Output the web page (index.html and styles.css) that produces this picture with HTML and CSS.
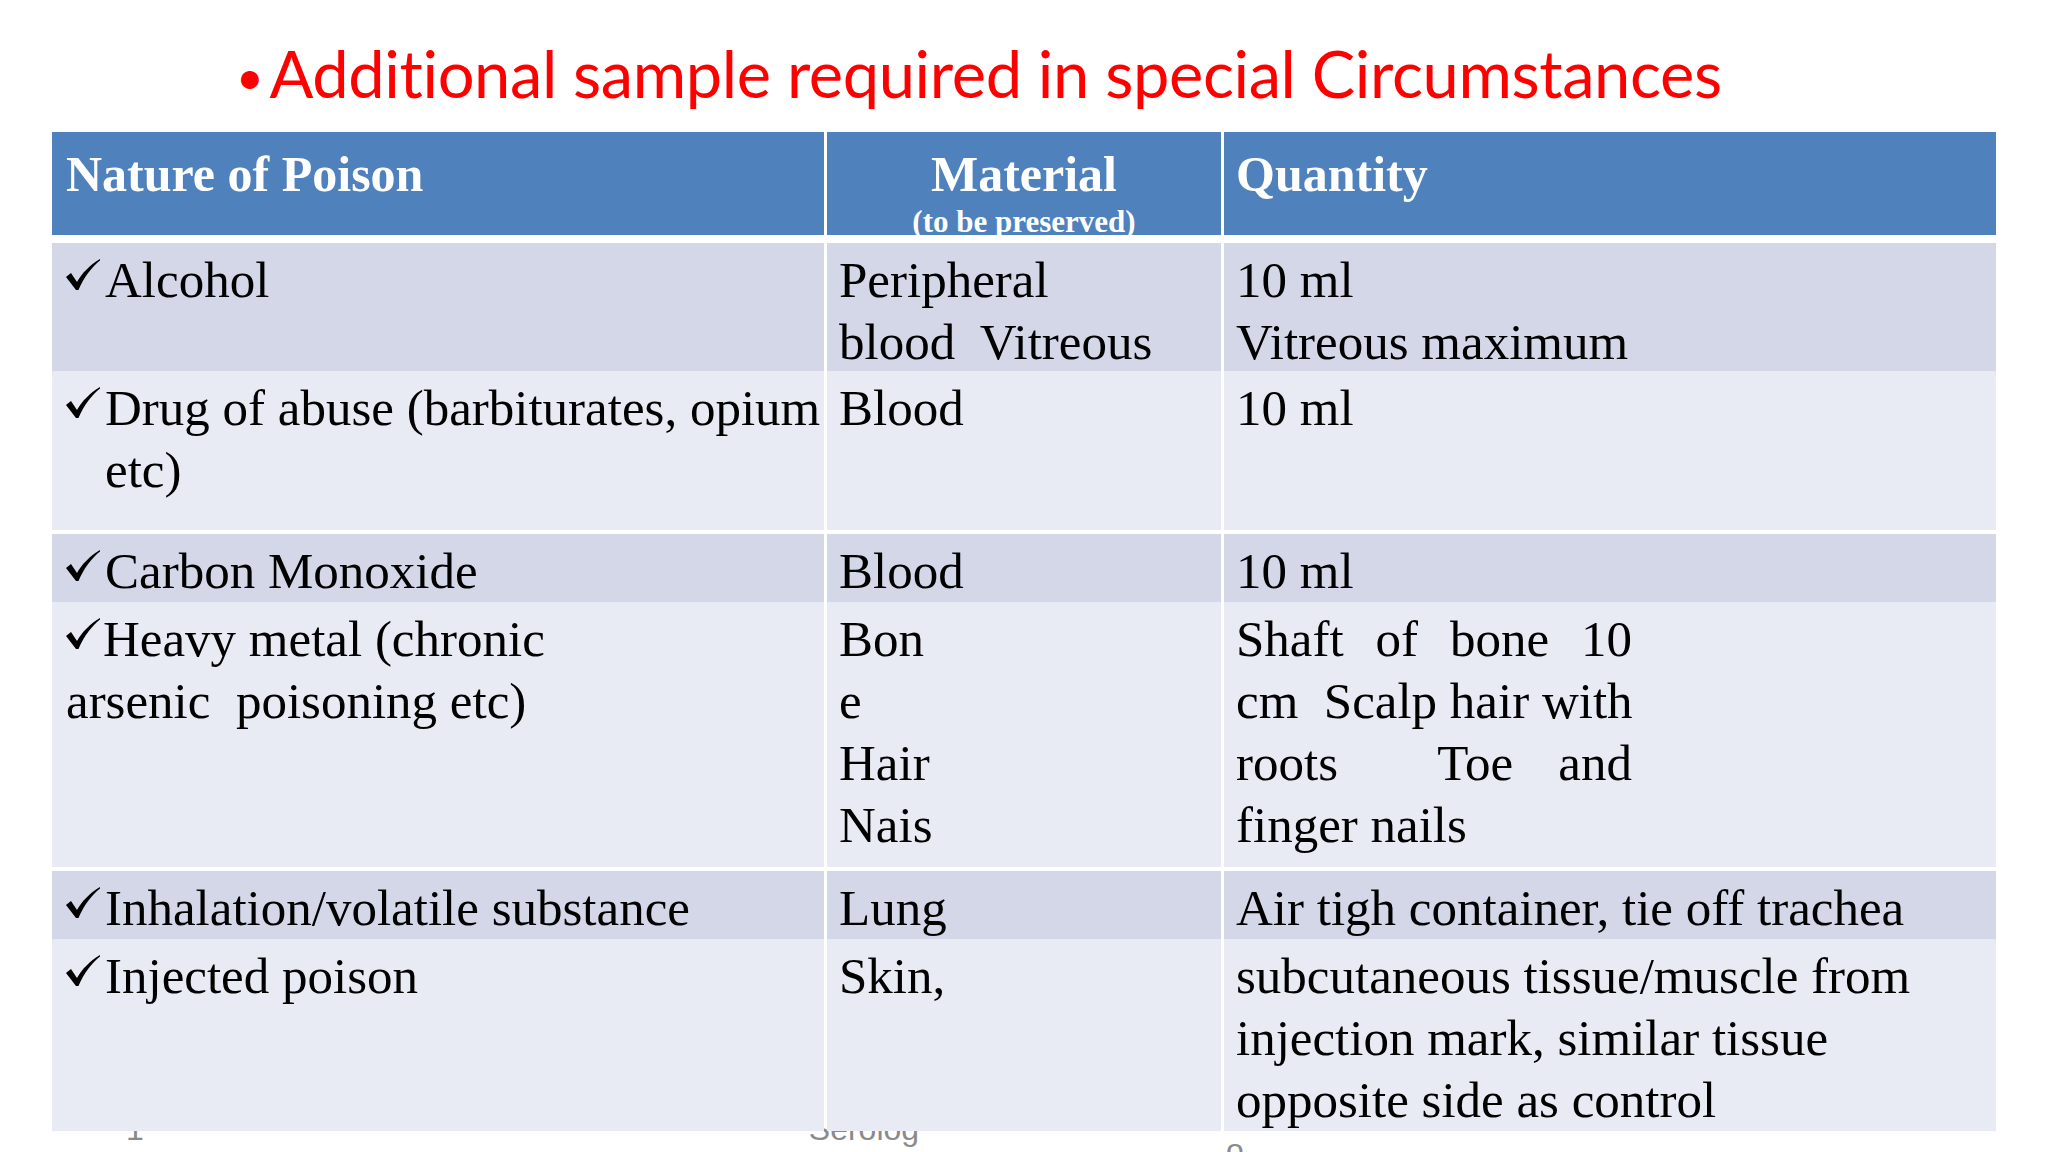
FILE: index.html
```html
<!DOCTYPE html>
<html lang="en">
<head>
<meta charset="utf-8">
<title>Additional sample required in special Circumstances</title>
<link rel="stylesheet" href="styles.css">
</head>
<body>
<div class="slide">
  <h1 class="title"><span class="bullet">•</span>Additional sample required in special Circumstances</h1>

  <div class="table">
    <div class="row head">
      <div class="cell">Nature of Poison</div>
      <div class="cell center">Material<div class="sub">(to be preserved)</div></div>
      <div class="cell">Quantity</div>
    </div>

    <div class="row odd r1">
      <div class="cell"><svg class="chk" viewBox="0 0 34 31"><path d="M0 18 L5 14 L11 23 C16 14 24 6 34 0 L34 1.6 C26 8 18 18 12.5 31 L10 31 Z"/></svg>Alcohol</div>
      <div class="cell">Peripheral<br>blood&nbsp; Vitreous</div>
      <div class="cell">10 ml<br>Vitreous maximum</div>
    </div>

    <div class="row even r2">
      <div class="cell hang"><svg class="chk" viewBox="0 0 34 31"><path d="M0 18 L5 14 L11 23 C16 14 24 6 34 0 L34 1.6 C26 8 18 18 12.5 31 L10 31 Z"/></svg>Drug of abuse (barbiturates, opium<br>etc)</div>
      <div class="cell">Blood</div>
      <div class="cell">10 ml</div>
    </div>

    <div class="row odd r3">
      <div class="cell"><svg class="chk" viewBox="0 0 34 31"><path d="M0 18 L5 14 L11 23 C16 14 24 6 34 0 L34 1.6 C26 8 18 18 12.5 31 L10 31 Z"/></svg>Carbon Monoxide</div>
      <div class="cell">Blood</div>
      <div class="cell">10 ml</div>
    </div>

    <div class="row even r4">
      <div class="cell"><svg class="chk tight" viewBox="0 0 34 31"><path d="M0 18 L5 14 L11 23 C16 14 24 6 34 0 L34 1.6 C26 8 18 18 12.5 31 L10 31 Z"/></svg>Heavy metal (chronic<br>arsenic&nbsp; poisoning etc)</div>
      <div class="cell">Bon<br>e<br>Hair<br>Nais</div>
      <div class="cell">
        <div class="just">Shaft of bone 10</div>
        <div class="just">cm&nbsp; Scalp hair with</div>
        <div class="just">roots <span class="wide">Toe</span> and</div>
        <div>finger nails</div>
      </div>
    </div>

    <div class="row odd r5">
      <div class="cell"><svg class="chk" viewBox="0 0 34 31"><path d="M0 18 L5 14 L11 23 C16 14 24 6 34 0 L34 1.6 C26 8 18 18 12.5 31 L10 31 Z"/></svg>Inhalation/volatile substance</div>
      <div class="cell">Lung</div>
      <div class="cell">Air tigh container, tie off trachea</div>
    </div>

    <div class="row even r6">
      <div class="cell"><svg class="chk" viewBox="0 0 34 31"><path d="M0 18 L5 14 L11 23 C16 14 24 6 34 0 L34 1.6 C26 8 18 18 12.5 31 L10 31 Z"/></svg>Injected poison</div>
      <div class="cell">Skin,</div>
      <div class="cell">subcutaneous tissue/muscle from<br>injection mark, similar tissue<br>opposite side as control</div>
    </div>
  </div>

  <div class="footer">
    <span class="f1">1</span><span class="f2">Serolog</span><span class="f3">o</span>
  </div>
</div>
</body>
</html>
```

FILE: styles.css
```css
html, body {
  margin: 0;
  padding: 0;
  background: #ffffff;
}

.slide {
  width: 2048px;
  height: 1152px;
  overflow: hidden;
  background: #ffffff;
}

.title {
  margin: 0;
  height: 132px;
  box-sizing: border-box;
  padding: 33px 0 0 236px;
  font-family: Lato, "Liberation Sans", sans-serif;
  font-weight: 400;
  font-size: 65px;
  line-height: 80px;
  letter-spacing: -0.4px;
  color: #ff0000;
  white-space: nowrap;
}
.bullet {
  font-size: 48px;
  margin-right: 6px;
  vertical-align: 4px;
}

.table {
  position: relative;
  z-index: 1;
  margin-left: 52px;
  width: 1944px;
  background: #ffffff;
  display: flex;
  flex-direction: column;
  gap: 4px;
  font-family: "Liberation Serif", "Times New Roman", serif;
  color: #000000;
}

.row {
  display: grid;
  grid-template-columns: 772px 394px 772px;
  column-gap: 3px;
}

.cell {
  box-sizing: border-box;
  padding: 6px 0 0 12px;
  font-size: 51px;
  line-height: 62px;
  white-space: nowrap;
}
.row .cell:first-child {
  padding-left: 14px;
}
.row .cell.hang {
  padding-left: 53px;
  text-indent: -39px;
}

.head {
  height: 103px;
  margin-bottom: 5px;
}
.head .cell {
  background: #4f81bd;
  color: #ffffff;
  font-weight: 700;
  font-size: 50px;
  line-height: 60px;
  padding-top: 12px;
  overflow: hidden;
}
.head .center {
  text-align: center;
  padding-left: 0;
}
.sub {
  font-size: 31px;
  line-height: 36px;
}

.odd .cell { background: #d3d7e8; }
.even .cell { background: #e9ebf4; }

.r1 { height: 124px; margin-top: -1px; }
.r2 { height: 159px; }
.r3 { height: 64px; }
.r4 { height: 265px; }
.r5 { height: 64px; }
.r6 { height: 186px; }

.chk {
  width: 34px;
  height: 31px;
  margin-right: 5px;
  vertical-align: 7px;
  fill: #000000;
}
.chk.tight { margin-right: 3px; }

.just {
  width: 396px;
  text-align: justify;
  text-align-last: justify;
}
.wide {
  margin-left: 54px;
}

.footer {
  position: relative;
  z-index: 0;
  margin-top: -30px;
  padding: 14px 0 0 126px;
  font-family: "Liberation Sans", Arial, sans-serif;
  font-size: 32px;
  line-height: 40px;
  color: #8a8a8a;
  white-space: nowrap;
}
.f2 { margin-left: 665px; }
.f3 { margin-left: 307px; vertical-align: -21px; }
```
